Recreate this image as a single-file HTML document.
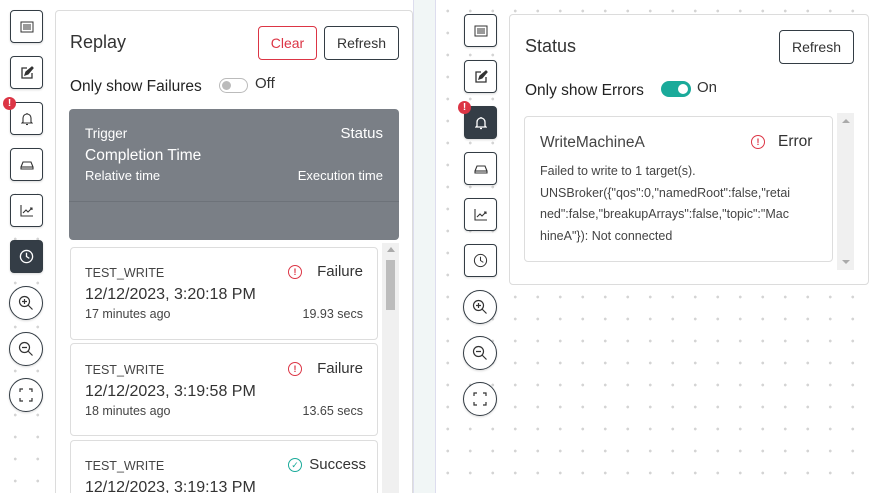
<!DOCTYPE html>
<html style="width:871px;height:493px;overflow:hidden"><head><style>
*{box-sizing:border-box;margin:0;padding:0}
body{width:871px;height:493px;overflow:hidden;background:#fff;font-family:"Liberation Sans",sans-serif;color:#333;position:relative}
.abs{position:absolute}
.dots{background-image:radial-gradient(circle,#d4d4d4 1.2px,transparent 1.6px);background-size:22.5px 22px}
.tb{position:absolute;width:33px;height:33px;border:1.3px solid #333c44;border-radius:4px;background:#fff;display:flex;align-items:center;justify-content:center;box-shadow:0 1px 2px rgba(0,0,0,.15)}
.tb.c{border-radius:50%;width:34px;height:34px}
.tb.d{background:#343d46}
.badge{position:absolute;width:13px;height:13px;border-radius:50%;background:#dc3545;color:#fff;font-size:10px;font-weight:bold;text-align:center;line-height:13px}
.panel{position:absolute;background:#fff;border:1px solid #dcdcdc;border-radius:4px}
.btn{position:absolute;border:1px solid #333c44;border-radius:4px;font-size:14px;display:flex;align-items:center;justify-content:center;color:#333;background:#fff}
.card{position:absolute;border:1px solid #ddd;border-radius:4px;background:#fff;overflow:hidden}
.sm{font-size:12.5px;color:#444}
</style></head><body>
<div class="abs dots" style="left:0;top:0;width:55px;height:493px;background-position:4px 8px"></div>
<div class="abs" style="left:413px;top:0;width:23px;height:493px;background:#f1f6f6;border-left:1px solid #dde;border-right:1px solid #dde"></div>
<div class="abs dots" style="left:436px;top:0;width:435px;height:493px;background-position:23px 0px"></div>

<div class="tb" style="left:10px;top:10px"><svg width="14" height="12" viewBox="0 0 14 12" fill="none" stroke="#333" stroke-width="1"><rect x="1" y="1" width="12" height="10"/><path d="M3 4h8M3 6h8M3 8h8"/></svg></div>
<div class="tb" style="left:10px;top:56px"><svg width="14" height="14" viewBox="0 0 14 14" fill="none" stroke="#333" stroke-width="1.3"><path d="M7 2H2v10h10V7"/><path d="M5 9l1-3 6-5 1 1-5 6z" fill="#333"/></svg></div>
<div class="tb" style="left:10px;top:102px"><svg width="12" height="14" viewBox="0 0 12 14" fill="none" stroke="#333" stroke-width="1.1"><path d="M2 10V6a4 4 0 018 0v4l1 1H1z"/><path d="M5 12.5h2"/><path d="M6 1v1"/></svg></div>
<div class="badge" style="left:3px;top:97px">!</div>
<div class="tb" style="left:10px;top:148px"><svg width="14" height="10" viewBox="0 0 14 10" fill="none" stroke="#333" stroke-width="1.1"><path d="M1 7l2-5h8l2 5v2H1z"/><path d="M1 7h12"/></svg></div>
<div class="tb" style="left:10px;top:194px"><svg width="14" height="13" viewBox="0 0 14 13" fill="none" stroke="#333" stroke-width="1.1"><path d="M1 1v11h12"/><path d="M3 9l3-3 2 2 4-4M10 4h2v2"/></svg></div>
<div class="tb d" style="left:10px;top:240px"><svg width="15" height="15" viewBox="0 0 16 16" fill="none" stroke="#fff" stroke-width="1.4"><circle cx="8" cy="8" r="6.5"/><path d="M8 4v4l3 2"/></svg></div>
<div class="tb c" style="left:9px;top:286px"><svg width="16" height="16" viewBox="0 0 16 16" fill="none" stroke="#333" stroke-width="1.2"><circle cx="6.5" cy="6.5" r="5"/><path d="M10 10l4.5 4.5M6.5 4v5M4 6.5h5"/></svg></div>
<div class="tb c" style="left:9px;top:332px"><svg width="16" height="16" viewBox="0 0 16 16" fill="none" stroke="#333" stroke-width="1.2"><circle cx="6.5" cy="6.5" r="5"/><path d="M10 10l4.5 4.5M4 6.5h5"/></svg></div>
<div class="tb c" style="left:9px;top:378px"><svg width="14" height="14" viewBox="0 0 14 14" fill="none" stroke="#333" stroke-width="1.2"><path d="M1 4V1h3M10 1h3v3M13 10v3h-3M4 13H1v-3"/></svg></div>

<div class="panel" style="left:55px;top:10px;width:358px;height:483px;border-bottom:none;border-radius:4px 4px 0 0"></div>
<div class="abs" style="left:70px;top:32px;font-size:18px;color:#333">Replay</div>
<div class="btn" style="left:258px;top:26px;width:59px;height:34px;border-color:#dc3545;color:#dc3545">Clear</div>
<div class="btn" style="left:324px;top:26px;width:75px;height:34px">Refresh</div>
<div class="abs" style="left:70px;top:78px;font-size:15.5px;color:#222">Only show Failures</div>
<div class="abs" style="left:219px;top:78px;width:29px;height:15px;border:1px solid #bbb;border-radius:8px"><div class="abs" style="left:2px;top:2px;width:9px;height:9px;border-radius:50%;background:#bbb"></div></div>
<div class="abs" style="left:255px;top:75px;font-size:15px;color:#333">Off</div>
<div class="abs" style="left:69px;top:109px;width:330px;height:131px;background:#7a7f86;border-radius:4px;color:#fff">
<div class="abs" style="left:16px;top:17px;font-size:13.5px">Trigger</div>
<div class="abs" style="right:16px;top:16px;font-size:15px">Status</div>
<div class="abs" style="left:16px;top:38px;font-size:15.5px">Completion Time</div>
<div class="abs" style="left:16px;top:59px;font-size:13px">Relative time</div>
<div class="abs" style="right:16px;top:59px;font-size:13px">Execution time</div>
<div class="abs" style="left:0;top:92px;width:330px;height:1px;background:#6d7279"></div>
</div>
<div class="abs" style="left:382px;top:243px;width:17px;height:250px;background:#f0f0f0"><div class="abs" style="left:5px;top:4px;border:4px solid transparent;border-bottom:5px solid #aaa;border-top:0"></div><div class="abs" style="left:4px;top:17px;width:9px;height:50px;background:#bcbcbc"></div></div>

<div class="card" style="left:70px;top:247px;width:308px;height:93px">
<div class="abs sm" style="left:14px;top:18px">TEST_WRITE</div>
<div class="abs" style="left:14px;top:38px;font-size:16px">12/12/2023, 3:20:18 PM</div>
<div class="abs sm" style="left:14px;top:59px">17 minutes ago</div>
<div class="abs sm" style="right:14px;top:59px">19.93 secs</div>
<div class="abs" style="left:217px;top:17px;width:14px;height:14px;border:1.2px solid #dc3545;border-radius:50%;color:#dc3545;font-size:9px;text-align:center;line-height:12px;font-weight:bold">!</div>
<div class="abs" style="right:14px;top:15px;font-size:15px">Failure</div>
</div>
<div class="card" style="left:70px;top:343px;width:308px;height:93px">
<div class="abs sm" style="left:14px;top:19px">TEST_WRITE</div>
<div class="abs" style="left:14px;top:39px;font-size:16px">12/12/2023, 3:19:58 PM</div>
<div class="abs sm" style="left:14px;top:60px">18 minutes ago</div>
<div class="abs sm" style="right:14px;top:60px">13.65 secs</div>
<div class="abs" style="left:217px;top:18px;width:14px;height:14px;border:1.2px solid #dc3545;border-radius:50%;color:#dc3545;font-size:9px;text-align:center;line-height:12px;font-weight:bold">!</div>
<div class="abs" style="right:14px;top:16px;font-size:15px">Failure</div>
</div>
<div class="card" style="left:70px;top:440px;width:308px;height:53px;border-bottom:none;border-radius:4px 4px 0 0">
<div class="abs sm" style="left:14px;top:18px">TEST_WRITE</div>
<div class="abs" style="left:14px;top:38px;font-size:16px">12/12/2023, 3:19:13 PM</div>
<div class="abs" style="left:217px;top:17px;width:14px;height:14px;border:1.2px solid #1aaa9a;border-radius:50%;color:#1aaa9a;font-size:9px;text-align:center;line-height:12px">✓</div>
<div class="abs" style="right:11px;top:15px;font-size:15px">Success</div>
</div>

<div class="tb" style="left:464px;top:14px"><svg width="14" height="12" viewBox="0 0 14 12" fill="none" stroke="#333" stroke-width="1"><rect x="1" y="1" width="12" height="10"/><path d="M3 4h8M3 6h8M3 8h8"/></svg></div>
<div class="tb" style="left:464px;top:60px"><svg width="14" height="14" viewBox="0 0 14 14" fill="none" stroke="#333" stroke-width="1.3"><path d="M7 2H2v10h10V7"/><path d="M5 9l1-3 6-5 1 1-5 6z" fill="#333"/></svg></div>
<div class="tb d" style="left:464px;top:106px"><svg width="12" height="14" viewBox="0 0 12 14" fill="none" stroke="#fff" stroke-width="1.3"><path d="M2 10V6a4 4 0 018 0v4l1 1H1z"/><path d="M5 12.5h2"/><path d="M6 1v1"/></svg></div>
<div class="badge" style="left:458px;top:101px">!</div>
<div class="tb" style="left:464px;top:152px"><svg width="14" height="10" viewBox="0 0 14 10" fill="none" stroke="#333" stroke-width="1.1"><path d="M1 7l2-5h8l2 5v2H1z"/><path d="M1 7h12"/></svg></div>
<div class="tb" style="left:464px;top:198px"><svg width="14" height="13" viewBox="0 0 14 13" fill="none" stroke="#333" stroke-width="1.1"><path d="M1 1v11h12"/><path d="M3 9l3-3 2 2 4-4M10 4h2v2"/></svg></div>
<div class="tb" style="left:464px;top:244px"><svg width="15" height="15" viewBox="0 0 16 16" fill="none" stroke="#333" stroke-width="1.1"><circle cx="8" cy="8" r="6.5"/><path d="M8 4v4l3 2"/></svg></div>
<div class="tb c" style="left:463px;top:290px"><svg width="16" height="16" viewBox="0 0 16 16" fill="none" stroke="#333" stroke-width="1.2"><circle cx="6.5" cy="6.5" r="5"/><path d="M10 10l4.5 4.5M6.5 4v5M4 6.5h5"/></svg></div>
<div class="tb c" style="left:463px;top:336px"><svg width="16" height="16" viewBox="0 0 16 16" fill="none" stroke="#333" stroke-width="1.2"><circle cx="6.5" cy="6.5" r="5"/><path d="M10 10l4.5 4.5M4 6.5h5"/></svg></div>
<div class="tb c" style="left:463px;top:382px"><svg width="14" height="14" viewBox="0 0 14 14" fill="none" stroke="#333" stroke-width="1.2"><path d="M1 4V1h3M10 1h3v3M13 10v3h-3M4 13H1v-3"/></svg></div>

<div class="panel" style="left:509px;top:14px;width:360px;height:271px"></div>
<div class="abs" style="left:525px;top:36px;font-size:18px">Status</div>
<div class="btn" style="left:779px;top:30px;width:75px;height:34px">Refresh</div>
<div class="abs" style="left:525px;top:82px;font-size:15.5px;color:#222">Only show Errors</div>
<div class="abs" style="left:661px;top:81px;width:30px;height:16px;border-radius:8px;background:#1aaa9a"><div class="abs" style="left:17px;top:3px;width:10px;height:10px;border-radius:50%;background:#fff"></div></div>
<div class="abs" style="left:697px;top:79px;font-size:15px">On</div>
<div class="card" style="left:524px;top:116px;width:309px;height:146px">
<div class="abs" style="left:15px;top:17px;font-size:15.5px;color:#444">WriteMachineA</div>
<div class="abs" style="left:226px;top:18px;width:14px;height:14px;border:1.2px solid #dc3545;border-radius:50%;color:#dc3545;font-size:9px;text-align:center;line-height:12px;font-weight:bold">!</div>
<div class="abs" style="left:253px;top:16px;font-size:15.5px">Error</div>
<div class="abs" style="left:15px;top:44px;width:290px;font-size:12.5px;line-height:21.5px;color:#444;white-space:nowrap">Failed to write to 1 target(s).<br>UNSBroker({"qos":0,"namedRoot":false,"retai<br>ned":false,"breakupArrays":false,"topic":"Mac<br>hineA"}): Not connected</div>
</div>
<div class="abs" style="left:837px;top:113px;width:17px;height:157px;background:#f0f0f0"><div class="abs" style="left:5px;top:6px;border:4px solid transparent;border-bottom:4px solid #aaa;border-top:0"></div><div class="abs" style="left:5px;bottom:6px;border:4px solid transparent;border-top:4px solid #aaa;border-bottom:0"></div></div>
</body></html>
